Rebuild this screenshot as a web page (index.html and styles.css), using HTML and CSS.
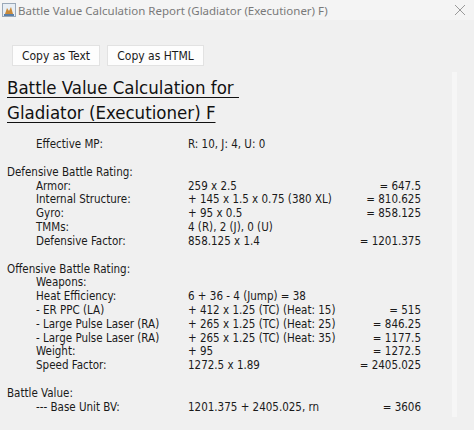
FILE: index.html
```html
<!DOCTYPE html>
<html>
<head>
<meta charset="utf-8">
<link rel="stylesheet" href="styles.css">
</head>
<body>
<div class="window">
  <div class="titlebar">
    <svg class="appicon" width="14" height="14" viewBox="0 0 14 14">
      <rect x="0.5" y="0.5" width="13" height="13" fill="#e8eef4" stroke="#9aa8b8"/>
      <path d="M3 11 L5 5 L7 8 L9 4 L11 11 Z" fill="#c98a3a"/>
      <rect x="2" y="11" width="10" height="2" fill="#5a7fa8"/>
    </svg>
    <span class="title">Battle Value Calculation Report (Gladiator (Executioner) F)</span>
    <svg class="close" width="12" height="12" viewBox="0 0 12 12">
      <path d="M1 1 L11 11 M11 1 L1 11" stroke="#9a9a9a" stroke-width="1"/>
    </svg>
  </div>
  <div class="toolbar">
    <button class="btn btn-text">Copy as Text</button>
    <button class="btn btn-html">Copy as HTML</button>
  </div>
  <div class="pane">
    <div class="report">
      <h1 class="heading"><span class="ul">Battle Value Calculation for&nbsp;</span><br><span class="ul">Gladiator (Executioner) F</span></h1>

      <div class="grid first">
        <span class="lbl">Effective MP:</span><span class="val">R: 10, J: 4, U: 0</span><span class="res"></span>
      </div>

      <div class="section">Defensive Battle Rating:</div>
      <div class="grid">
        <span class="lbl">Armor:</span><span class="val">259 x 2.5</span><span class="res">= 647.5</span>
        <span class="lbl">Internal Structure:</span><span class="val">+ 145 x 1.5 x 0.75 (380 XL)</span><span class="res">= 810.625</span>
        <span class="lbl">Gyro:</span><span class="val">+ 95 x 0.5</span><span class="res">= 858.125</span>
        <span class="lbl">TMMs:</span><span class="val">4 (R), 2 (J), 0 (U)</span><span class="res"></span>
        <span class="lbl">Defensive Factor:</span><span class="val">858.125 x 1.4</span><span class="res">= 1201.375</span>
      </div>

      <div class="section">Offensive Battle Rating:</div>
      <div class="grid">
        <span class="lbl">Weapons:</span><span class="val"></span><span class="res"></span>
        <span class="lbl">Heat Efficiency:</span><span class="val">6 + 36 - 4 (Jump) = 38</span><span class="res"></span>
        <span class="lbl">- ER PPC (LA)</span><span class="val">+ 412 x 1.25 (TC) (Heat: 15)</span><span class="res">= 515</span>
        <span class="lbl">- Large Pulse Laser (RA)</span><span class="val">+ 265 x 1.25 (TC) (Heat: 25)</span><span class="res">= 846.25</span>
        <span class="lbl">- Large Pulse Laser (RA)</span><span class="val">+ 265 x 1.25 (TC) (Heat: 35)</span><span class="res">= 1177.5</span>
        <span class="lbl">Weight:</span><span class="val">+ 95</span><span class="res">= 1272.5</span>
        <span class="lbl">Speed Factor:</span><span class="val">1272.5 x 1.89</span><span class="res">= 2405.025</span>
      </div>

      <div class="section">Battle Value:</div>
      <div class="grid">
        <span class="lbl">--- Base Unit BV:</span><span class="val">1201.375 + 2405.025, rn</span><span class="res">= 3606</span>
      </div>
    </div>
    <div class="track"></div>
  </div>
</div>
</body>
</html>
```

FILE: styles.css
```css
html, body {
  margin: 0;
  padding: 0;
}
body {
  width: 474px;
  height: 430px;
  overflow: hidden;
  background: #f0f0f0;
}
.window {
  width: 474px;
  height: 430px;
  background: #f0f0f0;
  font-family: "DejaVu Sans", sans-serif;
  font-stretch: condensed;
  color: #1a1a1a;
}
.titlebar {
  height: 20px;
  display: flex;
  align-items: center;
  padding: 0 8px 0 2px;
  background: #f4f4f4;
}
.appicon {
  margin-right: 2px;
}
.title {
  font-family: "Noto Sans", sans-serif;
  font-stretch: normal;
  font-size: 11.5px;
  color: #7a7a7a;
  flex: 1;
}
.toolbar {
  display: flex;
  gap: 7px;
  padding: 25px 0 0 12px;
  height: 21px;
}
.btn {
  font-family: "DejaVu Sans", sans-serif;
  font-stretch: condensed;
  font-size: 12px;
  color: #1a1a1a;
  background: #fdfdfd;
  border: 1px solid #e2e2e2;
  border-radius: 0;
  height: 21px;
  padding: 0;
  margin: 0;
}
.btn-text {
  width: 88px;
}
.btn-html {
  width: 97px;
}
.pane {
  display: flex;
  margin-top: 6px;
}
.report {
  flex: 1;
  padding-left: 7px;
}
.heading {
  font-size: 18.5px;
  font-weight: normal;
  line-height: 25px;
  margin: 3px 0 0 0;
  color: #111;
}
.ul {
  text-decoration: underline;
  text-decoration-thickness: 1px;
  text-underline-offset: 3px;
}
.grid {
  display: grid;
  grid-template-columns: 29px 152px 150px 83px;
  grid-auto-rows: 13.8px;
  font-size: 11.5px;
  line-height: 13.8px;
  white-space: nowrap;
}
.grid .lbl {
  grid-column: 2;
}
.grid .res {
  text-align: right;
}
.first {
  margin-top: 13px;
}
.section {
  font-size: 11.5px;
  line-height: 13.8px;
  margin-top: 14px;
}
.track {
  width: 5px;
  margin: 0 17px 0 0;
  height: 345px;
  background: #f6f6f6;
}
```
